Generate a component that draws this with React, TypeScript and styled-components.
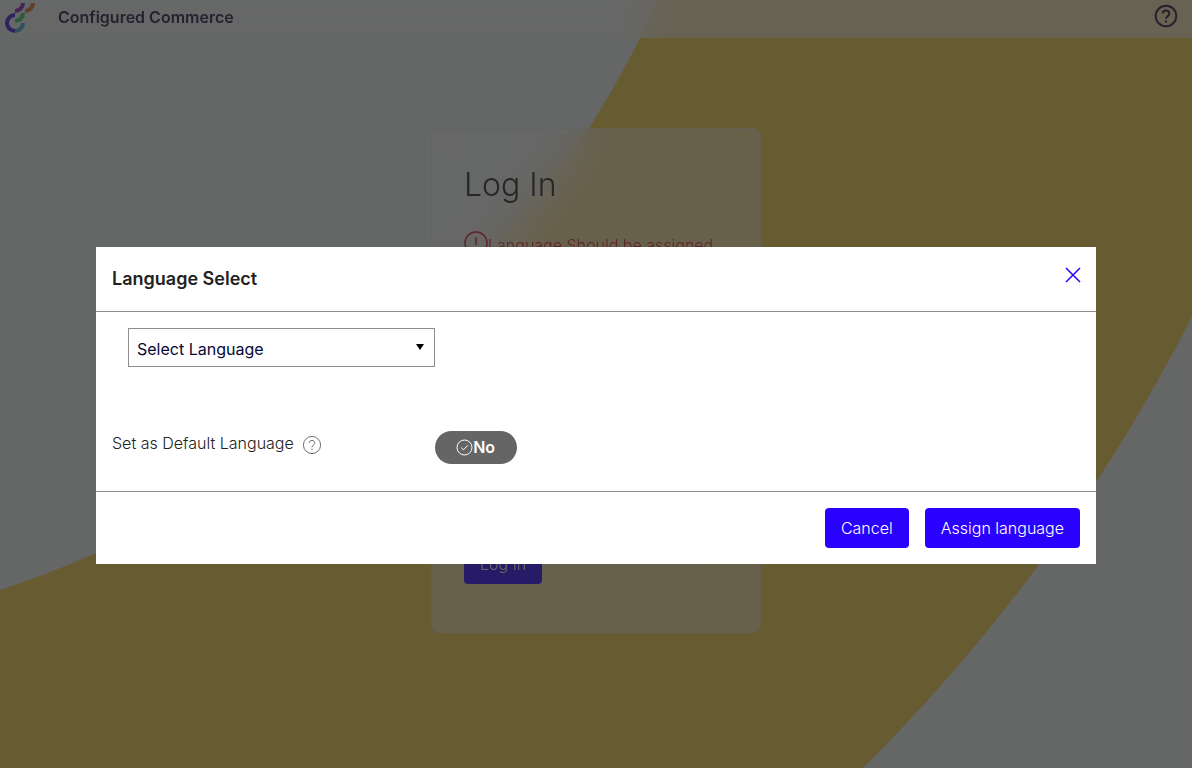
import React, { useState } from "react";
import styled, { createGlobalStyle } from "styled-components";

const GlobalStyle = createGlobalStyle`
  *, *::before, *::after { box-sizing: border-box; }
  body {
    margin: 0;
    background: #f8fcfb;
    color: #262626;
    font-family: Inter, "Liberation Sans", sans-serif;
    font-size: 16px;
    line-height: 24px;
  }
  button, select { font: inherit; }
`;

const Page = styled.div`
  min-height: 100vh;
  display: flex;
  flex-direction: column;
`;

const Backdrop = styled.svg`
  position: fixed;
  inset: 0;
  width: 100%;
  height: 100%;
  z-index: -1;
`;

const Header = styled.header`
  display: flex;
  align-items: flex-start;
  height: 38px;
  padding: 0 14px 0 4px;
  background: rgba(255, 255, 255, 0.6);
  backdrop-filter: blur(20px);
  color: #1d1740;
`;

const Brand = styled.span`
  flex: 1;
  padding: 5px 0 0 22px;
  font-weight: 600;
`;

const IconButton = styled.button`
  display: flex;
  padding: 0;
  border: 0;
  background: none;
  color: inherit;
  cursor: pointer;
`;

const HeaderButton = styled(IconButton)`
  margin-top: 4px;
`;

const Main = styled.main`
  flex: 1;
  display: flex;
  justify-content: center;
  align-items: flex-start;
  padding: 90px 16px 32px;
`;

const Card = styled.form`
  display: flex;
  flex-direction: column;
  align-items: flex-start;
  width: 100%;
  max-width: 330px;
  min-height: 505px;
  padding: 32px 32px 48px;
  border: 1px solid rgba(220, 225, 225, 0.4);
  border-radius: 8px;
  background: rgba(255, 255, 255, 0.46);
  backdrop-filter: blur(20px);
`;

const CardTitle = styled.h1`
  margin: 0 0 22px;
  font-size: 32px;
  line-height: 48px;
  font-weight: 350;
`;

const ErrorMessage = styled.p`
  display: flex;
  margin: 0;
  color: #e02030;
  font-weight: 300;

  span { padding-top: 2px; }
`;

const Button = styled.button`
  height: 40px;
  padding: 0 16px;
  border: 0;
  border-radius: 4px;
  background: #2a00ff;
  color: #fff;
  font-weight: 300;
  cursor: pointer;
`;

const LoginButton = styled(Button)`
  margin-top: auto;
`;

const Overlay = styled.div`
  position: fixed;
  inset: 0;
  display: flex;
  align-items: center;
  justify-content: center;
  padding: 43px 96px 0;
  background: rgba(38, 38, 38, 0.7);
`;

const Dialog = styled.section`
  width: 100%;
  max-width: 1000px;
  background: #fff;
`;

const DialogHeader = styled.header`
  display: flex;
  justify-content: space-between;
  align-items: flex-start;
  padding: 20px 15px 20px 16px;
  border-bottom: 1px solid #8e8e8e;
  color: #2a00ff;
`;

const DialogTitle = styled.h2`
  margin: 0;
  color: #222;
  font-size: 18px;
  line-height: 24px;
  font-weight: 600;
`;

const DialogBody = styled.div`
  padding: 16px 16px 27px;
`;

const FieldRow = styled.div`
  display: grid;
  grid-template-columns: 1fr 2fr;
  align-items: start;
`;

const SelectField = styled.div`
  position: relative;
  margin: 0 0 64px 16px;
`;

const Select = styled.select`
  display: block;
  width: 100%;
  height: 39px;
  padding: 2px 32px 0 8px;
  border: 1px solid #8e8e8e;
  border-radius: 0;
  appearance: none;
  background: #fff;
  color: #080736;
  font-weight: 400;
`;

const SelectArrow = styled.svg`
  position: absolute;
  top: 16px;
  right: 11px;
  pointer-events: none;
`;

const FieldLabel = styled.div`
  display: flex;
  align-items: center;
  gap: 8px;
  font-weight: 300;
  color: #222;
`;

const HelpButton = styled(IconButton)`
  margin-top: 4px;
  color: #555;
`;

const Toggle = styled.button`
  display: flex;
  align-items: center;
  justify-content: center;
  justify-self: start;
  width: 82px;
  height: 33px;
  padding: 0 0 1px;
  border: 0;
  border-radius: 17px;
  background: #656565;
  color: #fff;
  font-weight: 600;
  cursor: pointer;
`;

const DialogFooter = styled.footer`
  display: flex;
  justify-content: flex-end;
  gap: 16px;
  padding: 16px;
  border-top: 1px solid #8e8e8e;
`;

function Logo() {
  return (
    <svg width="32" height="34" viewBox="0 0 32 34" fill="none" strokeWidth="4" aria-hidden="true">
      <path d="M11 15A8 8 0 0 0 11 31" stroke="#3a18e8" />
      <path d="M11 31A8 8 0 0 0 19 23" stroke="#3cb0e0" />
      <path d="M11 21A8 8 0 0 0 19 13" stroke="#3ccc70" />
      <path d="M11 11A8 8 0 0 0 19 3" stroke="#8a20d8" />
      <path d="M21 11A8 8 0 0 0 29 3" stroke="#f07830" />
    </svg>
  );
}

interface QuestionProps {
  size: number;
  stroke: number;
}

function QuestionMark({ size, stroke }: QuestionProps) {
  return (
    <svg width={size} height={size} viewBox="0 0 24 24" fill="none" stroke="currentColor" strokeWidth={stroke} aria-hidden="true">
      <circle cx="12" cy="12" r="10.300" />
      <path d="M8.700 9.600C8.700 7.600 10 6.500 12 6.500s3.300 1.200 3.300 3c0 1.500-.9 2.200-1.900 2.800-1 .6-1.400 1.100-1.400 2.400" />
      <path d="M12 16.400v2" />
    </svg>
  );
}

export default function App() {
  const [isDefault, setIsDefault] = useState(false);

  return (
    <>
      <GlobalStyle />
      <Backdrop viewBox="0 0 1192 768" preserveAspectRatio="xMidYMid slice" aria-hidden="true">
        <rect width="1192" height="768" fill="#f8fcfb" />
        <circle cx="-381" cy="-484" r="1765" fill="#ffd54f" />
        <circle cx="-351" cy="-464" r="1111" fill="#f8fcfb" />
      </Backdrop>
      <Page>
        <Header>
          <Logo />
          <Brand>Configured Commerce</Brand>
          <HeaderButton type="button" aria-label="Help">
            <QuestionMark size={24} stroke={2} />
          </HeaderButton>
        </Header>
        <Main>
          <Card onSubmit={(e) => e.preventDefault()}>
            <CardTitle>Log In</CardTitle>
            <ErrorMessage role="alert">
              <svg width="24" height="24" viewBox="0 0 24 24" fill="none" stroke="currentColor" strokeWidth="1.500" aria-hidden="true">
                <circle cx="12" cy="12" r="11" />
                <path d="M12 6v8M12 16.500v2" />
              </svg>
              <span>Language Should be assigned</span>
            </ErrorMessage>
            <LoginButton type="submit">Log In</LoginButton>
          </Card>
        </Main>
      </Page>
      <Overlay>
        <Dialog role="dialog" aria-modal="true" aria-labelledby="dialog-title">
          <DialogHeader>
            <DialogTitle id="dialog-title">Language Select</DialogTitle>
            <IconButton type="button" aria-label="Close">
              <svg width="16" height="16" viewBox="0 0 16 16" fill="none" stroke="currentColor" strokeWidth="1.500" aria-hidden="true">
                <path d="M1 1l14 14M15 1L1 15" />
              </svg>
            </IconButton>
          </DialogHeader>
          <DialogBody>
            <FieldRow>
              <SelectField>
                <Select aria-label="Language" defaultValue="">
                  <option value="">Select Language</option>
                </Select>
                <SelectArrow width="8" height="6" viewBox="0 0 8 6" aria-hidden="true">
                  <path d="M0 0h8L4 6z" fill="#000" />
                </SelectArrow>
              </SelectField>
            </FieldRow>
            <FieldRow>
              <FieldLabel>
                <span id="default-label">Set as Default Language</span>
                <HelpButton type="button" aria-label="About the default language">
                  <QuestionMark size={20} stroke={1} />
                </HelpButton>
              </FieldLabel>
              <Toggle
                type="button"
                role="switch"
                aria-checked={isDefault}
                aria-labelledby="default-label"
                onClick={() => setIsDefault(!isDefault)}
              >
                <svg width="17" height="17" viewBox="0 0 17 17" fill="none" stroke="currentColor" aria-hidden="true">
                  <circle cx="8.500" cy="8.500" r="7.500" />
                  <path d="M5.300 8.700l2.200 2.100 4.200-4.400" />
                </svg>
                {isDefault ? "Yes" : "No"}
              </Toggle>
            </FieldRow>
          </DialogBody>
          <DialogFooter>
            <Button type="button">Cancel</Button>
            <Button type="button">Assign language</Button>
          </DialogFooter>
        </Dialog>
      </Overlay>
    </>
  );
}
